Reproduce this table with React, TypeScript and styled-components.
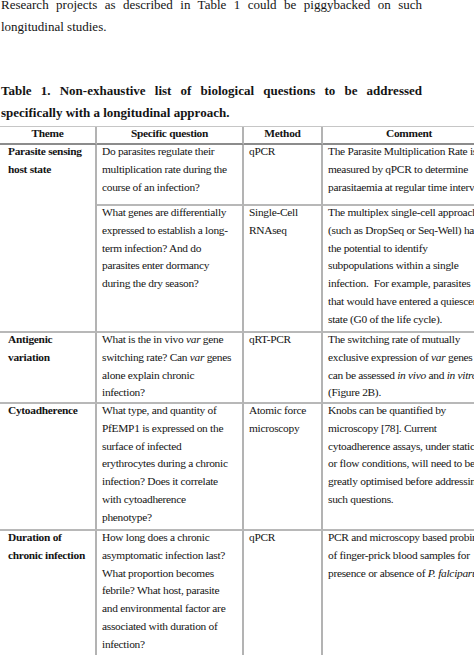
import React from "react";
import styled, { createGlobalStyle } from "styled-components";

const GlobalStyle = createGlobalStyle`
  html, body {
    margin: 0;
    padding: 0;
    background: #ffffff;
    overflow: hidden;
  }
  body {
    width: 474px;
    height: 655px;
    font-family: "Liberation Serif", "Times New Roman", serif;
    color: #141414;
  }
`;

const Page = styled.div`
  width: 474px;
  height: 655px;
  overflow: hidden;
  padding-left: 1px;
  box-sizing: border-box;
`;

const Paragraph = styled.div`
  width: 421px;
  margin-top: -6px;
  font-size: 13px;
  line-height: 21.5px;
`;

const Caption = styled.div`
  width: 421px;
  margin-top: 43px;
  font-size: 13px;
  font-weight: 700;
  line-height: 21.7px;
`;

const Line = styled.div<{ $justify?: boolean }>`
  white-space: ${(p) => (p.$justify ? "normal" : "nowrap")};
  text-align: ${(p) => (p.$justify ? "justify" : "left")};
  text-align-last: ${(p) => (p.$justify ? "justify" : "auto")};
`;

const TableGrid = styled.div`
  display: grid;
  grid-template-columns: 97px 147px 79px 172px;
  grid-template-rows: 18px 61px 127px 71px 127px 140px;
  width: 495px;
  margin-left: -1px;
  margin-top: 2.6px;
  border-top: 1px solid #c6c6c6;
  font-size: 11.4px;
  letter-spacing: -0.28px;
`;

const Cell = styled.div<{ $last?: boolean; $header?: boolean; $span?: number; $pad?: number }>`
  box-sizing: border-box;
  border-right: ${(p) => (p.$last ? "none" : "2px solid #b3b3b3")};
  border-bottom: 2px solid ${(p) => (p.$header ? "#8c8c8c" : "#b8b8b8")};
  grid-row: ${(p) => (p.$span ? `span ${p.$span}` : "auto")};
  padding-left: ${(p) => (p.$header ? 0 : p.$pad ?? 5)}px;
  text-align: ${(p) => (p.$header ? "center" : "left")};
  font-weight: ${(p) => (p.$header ? 700 : 400)};
  line-height: ${(p) => (p.$header ? "12px" : "17.8px")};
`;

const CellText = styled.div<{ $bold?: boolean }>`
  margin-top: -2px;
  white-space: nowrap;
  font-weight: ${(p) => (p.$bold ? 700 : "inherit")};
`;

const Em = styled.i`
  font-style: italic;
`;

type Lines = React.ReactNode[];

const Text: React.FC<{ lines: Lines; bold?: boolean }> = ({ lines, bold }) => (
  <CellText $bold={bold}>
    {lines.map((l, i) => (
      <div key={i}>{l}</div>
    ))}
  </CellText>
);

type Row = {
  theme?: Lines;
  themeSpan?: number;
  question: Lines;
  method: Lines;
  comment: Lines;
};

const rows: Row[] = [
  {
    theme: ["Parasite sensing", "host state"],
    themeSpan: 2,
    question: ["Do parasites regulate their", "multiplication rate during the", "course of an infection?"],
    method: ["qPCR"],
    comment: [
      "The Parasite Multiplication Rate is",
      "measured by qPCR to determine",
      "parasitaemia at regular time intervals.",
    ],
  },
  {
    question: [
      "What genes are differentially",
      "expressed to establish a long-",
      "term infection? And do",
      "parasites enter dormancy",
      "during the dry season?",
    ],
    method: ["Single-Cell", "RNAseq"],
    comment: [
      "The multiplex single-cell approach",
      "(such as DropSeq or Seq-Well) has",
      "the potential to identify",
      "subpopulations within a single",
      "infection.\u00a0 For example, parasites",
      "that would have entered a quiescent",
      "state (G0 of the life cycle).",
    ],
  },
  {
    theme: ["Antigenic", "variation"],
    question: [
      <>What is the in vivo <Em>var</Em> gene</>,
      <>switching rate? Can <Em>var</Em> genes</>,
      "alone explain chronic",
      "infection?",
    ],
    method: ["qRT-PCR"],
    comment: [
      "The switching rate of mutually",
      <>exclusive expression of <Em>var</Em> genes</>,
      <>can be assessed <Em>in vivo</Em> and <Em>in vitro</Em></>,
      "(Figure 2B).",
    ],
  },
  {
    theme: ["Cytoadherence"],
    question: [
      "What type, and quantity of",
      "PfEMP1 is expressed on the",
      "surface of infected",
      "erythrocytes during a chronic",
      "infection? Does it correlate",
      "with cytoadherence",
      "phenotype?",
    ],
    method: ["Atomic force", "microscopy"],
    comment: [
      "Knobs can be quantified by",
      "microscopy [78]. Current",
      "cytoadherence assays, under static",
      "or flow conditions, will need to be",
      "greatly optimised before addressing",
      "such questions.",
    ],
  },
  {
    theme: ["Duration of", "chronic infection"],
    question: [
      "How long does a chronic",
      "asymptomatic infection last?",
      "What proportion becomes",
      "febrile? What host, parasite",
      "and environmental factor are",
      "associated with duration of",
      "infection?",
    ],
    method: ["qPCR"],
    comment: [
      "PCR and microscopy based probing",
      "of finger-prick blood samples for",
      <>presence or absence of <Em>P. falciparum</Em>.</>,
    ],
  },
];

const headers = ["Theme", "Specific question", "Method", "Comment"];

export default function App() {
  return (
    <>
      <GlobalStyle />
      <Page>
        <Paragraph>
          <Line $justify>Research projects as described in Table 1 could be piggybacked on such</Line>
          <Line>longitudinal studies.</Line>
        </Paragraph>
        <Caption>
          <Line $justify>Table 1. Non-exhaustive list of biological questions to be addressed</Line>
          <Line>specifically with a longitudinal approach.</Line>
        </Caption>
        <TableGrid>
          {headers.map((h, i) => (
            <Cell key={h} $header $last={i === 3}>
              {h}
            </Cell>
          ))}
          {rows.map((r, i) => (
            <React.Fragment key={i}>
              {r.theme && (
                <Cell $span={r.themeSpan} $pad={8}>
                  <Text lines={r.theme} bold />
                </Cell>
              )}
              <Cell $pad={5}>
                <Text lines={r.question} />
              </Cell>
              <Cell $pad={5}>
                <Text lines={r.method} />
              </Cell>
              <Cell $pad={5} $last>
                <Text lines={r.comment} />
              </Cell>
            </React.Fragment>
          ))}
        </TableGrid>
      </Page>
    </>
  );
}
